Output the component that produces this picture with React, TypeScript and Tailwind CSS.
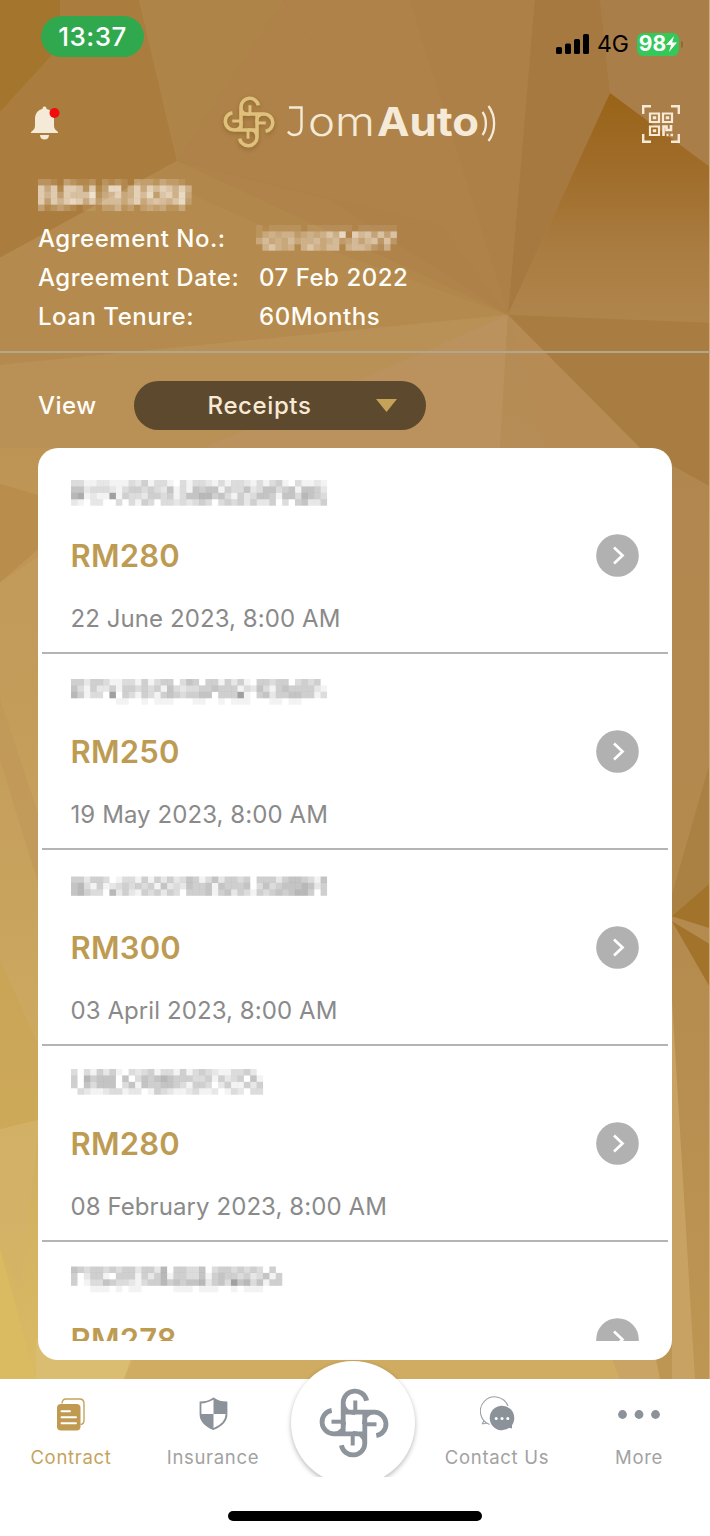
import React from "react";

type Receipt = { code: string[]; shift: number; amount: string; date?: string };

const RECEIPTS: Receipt[] = [
  {
    code: [
      "3311221113241331031332131332131341031121",
      "5523332134434325131545514335235534515542",
      "6712118143324434135566453142355415536543",
      "2102200303143033232343034342422403045224",
    ],
    shift: -3,
    amount: "RM280",
    date: "22 June 2023, 8:00 AM",
  },
  {
    code: [
      "4424431133141344035404414241044344034340",
      "5314224144343415323344544413253145444421",
      "6413308043143145434455044481045244554413",
      "0000000110010111000110010111000110110000",
    ],
    shift: 0,
    amount: "RM250",
    date: "19 May 2023, 8:00 AM",
  },
  {
    code: [
      "4424430133141424235413524434044424554315",
      "5631412343434152325445154445035345556524",
      "5643306242143424304445145243143454566404",
      "0000000000000000000000000000000000000000",
    ],
    shift: 1.5,
    amount: "RM300",
    date: "03 April 2023, 8:00 AM",
  },
  {
    code: [
      "303142410323413314134321133420",
      "406455505035456544433414234051",
      "405355503515445543144302411424",
      "032112331220143211231120132033",
    ],
    shift: -2,
    amount: "RM280",
    date: "08 February 2023, 8:00 AM",
  },
  {
    code: [
      "543443434424426044335034434343040",
      "402441044414246144335145443423514",
      "401335433213446454556245385635144",
      "000111010110000011101110010111000",
    ],
    shift: -0.5,
    amount: "RM278",
  },
];

const PLATE = [
  "221032112021210322132210",
  "747177627138814737576474",
  "757376669245734758267483",
  "737578747355535735654682",
  "312321011022412023231130",
];

const AGREEMENT = [
  "1011111011111110111111",
  "1343442343464807563636",
  "3534353445345235356262",
  "0464340464355045542140",
];

function Mosaic({ rows, light = false, shift = 0 }: { rows: string[]; light?: boolean; shift?: number }) {
  const cell = 6.4;
  const w = rows[0].length * cell;
  const h = rows.length * cell;
  return (
    <svg width={w} height={h} viewBox={`0 ${-shift} ${w} ${h}`} className="block overflow-visible" aria-hidden="true">
      {rows.flatMap((row, y) =>
        row.split("").map((v, x) => (
          <rect
            key={`${x}-${y}`}
            x={x * cell}
            y={y * cell}
            width={cell + 0.1}
            height={cell + 0.1}
            fill={light ? "#faf3ea" : "#707070"}
            opacity={Number(v) * (light ? 0.095 : 0.083)}
          />
        )),
      )}
    </svg>
  );
}

function Pinwheel({ size, color }: { size: number; color: string }) {
  return (
    <svg width={size} height={size} viewBox="-35 -35 70 70" fill="none" stroke={color} strokeWidth="4.8">
      {[0, 90, 180, 270].map((a) => (
        <g key={a} transform={`rotate(${a})`}>
          <path d="M-10.800 12V-20.500A11.800 11.800 0 0 1 12.600 -22.300" />
          <path d="M-10.500 -20A11.600 11.600 0 0 0 1 -9.500" strokeWidth="3" />
          <path d="M1.300 -22.500V-11" strokeWidth="4" />
        </g>
      ))}
    </svg>
  );
}

function Facets() {
  return (
    <svg className="absolute inset-0 h-full w-full" viewBox="0 0 710 1380" preserveAspectRatio="none">
      <defs>
        <linearGradient id="base" x1="0.6" y1="0" x2="0.4" y2="1">
          <stop offset="0" stopColor="#ac7f47" />
          <stop offset="0.28" stopColor="#b88f57" />
          <stop offset="0.6" stopColor="#bf9859" />
          <stop offset="1" stopColor="#d1b068" />
        </linearGradient>
        <linearGradient id="dark" x1="0" y1="0" x2="0" y2="1">
          <stop offset="0" stopColor="#996318" />
          <stop offset="0.35" stopColor="#a06d2b" />
          <stop offset="0.7" stopColor="#aa7d42" />
          <stop offset="1" stopColor="#b0854b" />
        </linearGradient>
        <linearGradient id="left" x1="0" y1="0" x2="0" y2="1">
          <stop offset="0" stopColor="#bd9454" />
          <stop offset="0.5" stopColor="#c8a35e" />
          <stop offset="1" stopColor="#d9ba64" />
        </linearGradient>
        <linearGradient id="right" x1="0" y1="0" x2="0" y2="1">
          <stop offset="0" stopColor="#b18750" />
          <stop offset="0.5" stopColor="#b48a4e" />
          <stop offset="1" stopColor="#be9653" />
        </linearGradient>
      </defs>
      <path d="M0 0H710V1380H0z" fill="url(#base)" />
      <path d="M60 0H139L177 161L0 258V112L50 57z" fill="#aa7d3e" />
      <path d="M0 0H60V42L50 57L0 112z" fill="#a3752d" />
      <path d="M139 0H283L508 315L177 161z" fill="#af8449" />
      <path d="M177 161L283 0L508 315L330 200z" fill="#ac7f44" opacity=".2" />
      <path d="M177 161L508 315L0 375V258z" fill="#b48a4e" />
      <path d="M150 176L177 161L440 225L508 315L260 225z" fill="#ae8249" opacity=".3" />
      <path d="M283 0H410L508 315z" fill="#ae8249" />
      <path d="M410 0H535L508 315z" fill="#ac8046" />
      <path d="M535 0H600L610 93L508 315z" fill="#a67940" />
      <path d="M600 0H710V167L610 93z" fill="#aa7e49" />
      <path d="M610 93L710 167V323L508 315z" fill="url(#dark)" />
      <path d="M508 315L0 365V450H200z" fill="#b99156" />
      <path d="M508 315L200 450H500z" fill="#bb925e" />
      <path d="M508 315L500 450H545z" fill="#b58b55" opacity=".7" />
      <path d="M508 315L545 450H642z" fill="#b68c54" />
      <path d="M508 315L710 323V487L640 448z" fill="#a97c41" />
      <path d="M640 448L710 487V1380H640z" fill="url(#right)" />
      <path d="M710 763L672 895V917L710 884z" fill="#aa8043" />
      <path d="M672 917L710 884V929z" fill="#a1732b" />
      <path d="M672 922L710 945V988z" fill="#a1732b" />
      <path d="M672 1000L695 1380H672z" fill="#c8a263" />
      <path d="M0 448H60V1380H0z" fill="url(#left)" />
      <path d="M0 484L40 496V556L0 583z" fill="#b98d4c" />
      <path d="M0 583L40 548V660L0 700z" fill="#c39c5d" opacity=".6" />
      <path d="M0 700L40 820V890L0 760z" fill="#c09656" opacity=".6" />
      <path d="M0 960L40 1050V1120L0 1130z" fill="#c9a352" opacity=".5" />
      <path d="M0 1130L40 1120L20 1290L0 1240z" fill="#d4b36b" opacity=".6" />
      <path d="M36 1340H138L124 1380H36z" fill="#dbbd72" />
      <path d="M0 1250L36 1380H0z" fill="#dabb61" />
      <path d="M138 1350H620V1380H124z" fill="#d0ac62" />
      <path d="M610 1355H655L660 1380H620z" fill="#c9a464" />
      <path d="M709.5 0V1380" stroke="#d0ae7e" />
    </svg>
  );
}

function StatusBar() {
  return (
    <div className="flex h-[76px] items-start justify-between pt-4 pr-[27px] pl-[41px]">
      <div className="flex h-[41px] w-[103px] items-center justify-center rounded-full bg-[#30a84e] text-[26px] font-medium tracking-[0.5px] text-white">
        13:37
      </div>
      <div className="flex items-center pt-[14px]">
        <svg width="33" height="20" viewBox="0 0 33 20" fill="#000">
          <rect x="0" y="13" width="6" height="7" rx="1.6" />
          <rect x="9" y="9.5" width="6" height="10.5" rx="1.6" />
          <rect x="18" y="5" width="6" height="15" rx="1.6" />
          <rect x="27" y="0" width="6" height="20" rx="1.6" />
        </svg>
        <span className="ml-2 w-[40px] text-[23px] leading-[28px] tracking-[-0.2px] text-black">4G</span>
        <div className="flex h-[23px] w-[42px] items-center justify-center rounded-[6px] bg-[#34c759] text-[21px] font-bold text-white">
          98
          <svg width="11" height="16" viewBox="0 0 11 16" fill="#fff">
            <path d="M8 0L0 9H5L3 16L11 6.500H6.200z" />
          </svg>
        </div>
        <div className="ml-0.5 h-[7px] w-[2px] rounded-r bg-[#8c6a3a]" />
      </div>
    </div>
  );
}

function Header() {
  return (
    <header className="flex h-[94px] items-center justify-between pr-[30px] pl-[31px]">
      <svg width="30" height="36" viewBox="0 0 30 36" className="overflow-visible">
        <path
          d="M13.500 1.500C15 1.500 15.500 2.500 15.500 4C20.500 5 23 9 23 14V21C23 24 25 25 27 27V28H0V27C2 25 4 24 4 21V14C4 9 6.500 5 11.500 4C11.500 2.500 12 1.500 13.500 1.500zM9 30H18C18 33 16 34.500 13.500 34.500S9 33 9 30z"
          fill="#f5ead8"
        />
        <circle cx="23.500" cy="8" r="5" fill="#f40b0b" />
      </svg>
      <div className="-mt-[3px] flex items-center pl-[19px]">
        <div className="drop-shadow-[0_2px_2px_rgba(100,60,10,0.35)]">
          <Pinwheel size={52} color="#dfc17e" />
        </div>
        <svg width="215" height="50" viewBox="0 0 215 50" className="ml-[10px] overflow-visible" fill="#f5ead8">
          <path d="M4 10.500H16.500V30C16.500 35.500 14 38 9.500 38C6.500 38 4.500 36.800 3 34.500" fill="none" stroke="#f5ead8" strokeWidth="2.400" />
          <text x="23" y="39.300" fontSize="39" fontWeight="300" textLength="67" lengthAdjust="spacingAndGlyphs">om</text>
          <text x="92" y="39.300" fontSize="40" fontWeight="700" textLength="102" lengthAdjust="spacingAndGlyphs">Auto</text>
          <path d="M197.500 15C202 21 202 32 197.500 38M203.500 9C211 19 211 34 203.500 44" fill="none" stroke="#f5ead8" strokeWidth="2.300" />
        </svg>
      </div>
      <svg width="38" height="38" viewBox="0 0 38 38" fill="none" stroke="#f7ead6" className="mt-[2px]">
        <path d="M1.200 9V1.200H9M29 1.200H36.800V9M36.800 29V36.800H29M9 36.800H1.200V29" strokeWidth="2.400" />
        <path d="M8 8.500H17V17H8zM21 8.500H30V17H21zM8 21.500H17V30H8z" strokeWidth="2.200" />
        <path d="M11.500 12H13.500V13.500H11.500zM24.500 12H26.500V13.500H24.500zM11.500 25H13.500V26.500H11.500z" strokeWidth="1.500" />
        <path d="M21.500 31V21.500H24.500V25H29V20" strokeWidth="2.600" />
        <path d="M24.500 30H26.500M28.500 30H31" strokeWidth="2.400" />
      </svg>
    </header>
  );
}

function Agreement() {
  return (
    <section className="h-[183px] border-b-2 border-[#b3a68c] pt-[9px] pl-[38px] text-[24px] leading-[39px] font-medium tracking-[0.52px] text-[#fffdf8]">
      <div className="h-[40px]">
        <Mosaic rows={PLATE} light />
      </div>
      <dl className="grid grid-cols-[221px_1fr]">
        <dt>Agreement No.:</dt>
        <dd className="-ml-[3px] pt-[6px]">
          <Mosaic rows={AGREEMENT} light />
        </dd>
        <dt>Agreement Date:</dt>
        <dd>07 Feb 2022</dd>
        <dt>Loan Tenure:</dt>
        <dd>60Months</dd>
      </dl>
    </section>
  );
}

function ViewPicker() {
  return (
    <div className="flex h-[95px] items-center pt-[10px] pl-[38px] text-[24px] font-medium tracking-[0.5px]">
      <span className="w-[96px] text-[#fffdf8]">View</span>
      <button className="relative h-[49px] w-[292px] rounded-full bg-[#5d492e] pr-[41px] text-center tracking-[0.6px] text-[#f8ead5]">
        Receipts
        <svg className="absolute top-[18px] right-[29px]" width="21" height="13" viewBox="0 0 21 13">
          <path d="M0 0H21L10.500 13z" fill="#c4a258" />
        </svg>
      </button>
    </div>
  );
}

function ReceiptRow({ item }: { item: Receipt }) {
  return (
    <li className="mx-1 flex h-[196px] shrink-0 items-start justify-between border-b-2 border-[#b4b4b4] pt-[22px] pr-7 pl-7">
      <div>
        <div className="h-[46px] pt-[3px] pl-[0.5px]">
          <Mosaic rows={item.code} shift={item.shift} />
        </div>
        <p className="ml-[0.5px] h-[60px] text-[31px] leading-[60px] font-semibold tracking-[0.2px] text-[#bd9b53]">
          {item.amount}
        </p>
        {item.date && (
          <p className="ml-[0.5px] text-[24px] leading-[66px] tracking-[0.08px] text-[#8a8a8a]">{item.date}</p>
        )}
      </div>
      <svg className="mt-[54px] mr-[1px]" width="43" height="43" viewBox="0 0 43 43" fill="none">
        <circle cx="21.500" cy="21.500" r="21.300" fill="#b1b1b1" />
        <path d="M18 13.500L26.500 21.500L18 29.500" stroke="#fff" strokeWidth="2.700" />
      </svg>
    </li>
  );
}

function NavItem({ label, active = false, children }: { label: string; active?: boolean; children: React.ReactNode }) {
  return (
    <a className="flex w-[142px] flex-col items-center pt-[14px]">
      <span className="flex h-[42px] items-center justify-center">{children}</span>
      <span
        className={
          active
            ? "mt-[9px] text-[18.5px] leading-[26px] tracking-[0.7px] text-[#c5a35e]"
            : "mt-[9px] text-[18.5px] leading-[26px] tracking-[0.7px] text-[#a2a2a2]"
        }
      >
        {label}
      </span>
    </a>
  );
}

function BottomNav() {
  return (
    <nav className="relative h-[157px] bg-white">
      <div className="flex">
        <NavItem label="Contract" active>
          <svg width="28" height="33" viewBox="0 0 28 33" fill="none">
            <path d="M5 5.500C5 2.500 6.500 1 9 1H22.500C25.500 1 27 2.500 27 5.500V22C27 25 26 26.500 23.500 26.500" stroke="#c5a25a" strokeWidth="1.400" />
            <rect x="0" y="6" width="23.500" height="26.500" rx="4" fill="#c09a50" />
            <path d="M4.500 13.200H13M4.500 19.200H19M4.500 25.200H19" stroke="#fff" strokeWidth="1.900" strokeLinecap="round" />
          </svg>
        </NavItem>
        <NavItem label="Insurance">
          <svg width="29" height="34" viewBox="0 0 29 34">
            <path d="M14.500 1.500C10 4.500 6 5.500 1.500 5.500V17C1.500 24 7 29 14.500 32C22 29 27.500 24 27.500 17V5.500C23 5.500 19 4.500 14.500 1.500z" fill="#fff" stroke="#8c9299" strokeWidth="1.800" />
            <path d="M14.500 1C19 4.500 23 5.500 28 5.500V17H14.500zM14.500 17V33C7 30 1.200 24.500 1 17z" fill="#8c9299" />
          </svg>
        </NavItem>
        <div className="w-[142px]" />
        <NavItem label="Contact Us">
          <svg width="35" height="36" viewBox="0 0 35 36" fill="none">
            <path d="M9.500 28.500A14.300 14.300 0 1 1 28 10M2.200 28L4 24.500M2.200 28L7 27" stroke="#9ba0a6" strokeWidth="1.100" />
            <circle cx="22" cy="22" r="12.300" fill="#8c9299" />
            <path d="M32 26V32.500L26 31z" fill="#8c9299" />
            <circle cx="16.200" cy="22.500" r="1.500" fill="#fff" />
            <circle cx="22" cy="22.500" r="1.500" fill="#fff" />
            <circle cx="27.800" cy="22.500" r="1.500" fill="#fff" />
          </svg>
        </NavItem>
        <NavItem label="More">
          <svg width="42" height="9" viewBox="0 0 42 9" fill="#8c9299">
            <circle cx="4.500" cy="4.500" r="4.400" />
            <circle cx="21" cy="4.500" r="4.400" />
            <circle cx="37.500" cy="4.500" r="4.400" />
          </svg>
        </NavItem>
      </div>
      <div className="absolute -top-[22px] left-[285px] flex h-[120px] w-[136px] justify-center overflow-hidden pt-[4px]">
        <div className="flex h-[124px] w-[124px] shrink-0 items-center justify-center rounded-full bg-white pl-[1px] shadow-[0_2px_5px_rgba(0,0,0,0.28)]">
          <Pinwheel size={70} color="#8e949b" />
        </div>
      </div>
      <div className="absolute bottom-[15px] left-[228px] h-[10px] w-[254px] rounded-full bg-black" />
    </nav>
  );
}

export default function App() {
  return (
    <div className="flex h-[1536px] w-[710px] flex-col overflow-hidden bg-white font-['Inter','Liberation_Sans',sans-serif]">
      <div className="relative h-[1379px] shrink-0">
        <Facets />
        <div className="relative">
          <StatusBar />
          <Header />
          <Agreement />
          <ViewPicker />
          <main className="mr-[38px] ml-[38px] h-[912px] rounded-[20px] bg-white pt-[10px]">
            <ul className="flex h-[883px] flex-col overflow-hidden">
              {RECEIPTS.map((item, i) => (
                <ReceiptRow key={i} item={item} />
              ))}
            </ul>
          </main>
        </div>
      </div>
      <BottomNav />
    </div>
  );
}
